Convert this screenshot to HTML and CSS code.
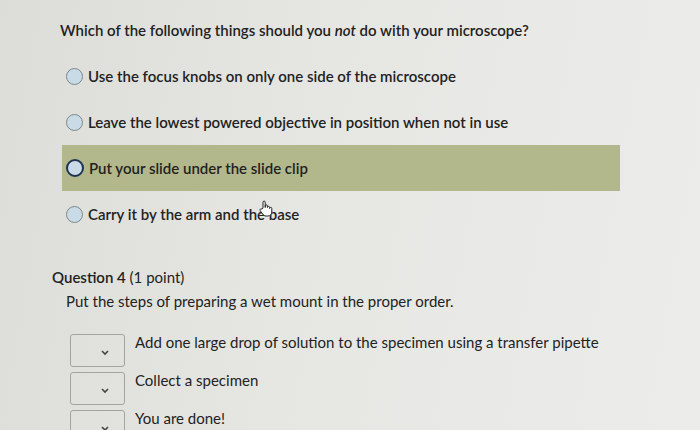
FILE: index.html
```html
<!DOCTYPE html>
<html lang="en">
<head>
    <meta charset="UTF-8">
    <meta name="viewport" content="width=device-width, initial-scale=1.0">
    <title>Quiz</title>
    <link rel="stylesheet" href="styles.css">
</head>
<body>
    <div class="quiz">
        <p class="prompt">Which of the following things should you <em>not</em> do with your microscope?</p>

        <div class="choices">
            <label class="choice"><span class="radio"></span>Use the focus knobs on only one side of the microscope</label>
            <label class="choice"><span class="radio"></span>Leave the lowest powered objective in position when not in use</label>
            <label class="choice active"><span class="radio"></span>Put your slide under the slide clip</label>
            <label class="choice"><span class="radio"></span>Carry it by the arm and the base</label>
        </div>

        <h2 class="q-title"><strong>Question 4</strong> (1 point)</h2>
        <p class="q-text">Put the steps of preparing a wet mount in the proper order.</p>

        <div class="order">
            <div class="step">
                <div class="pick"><svg width="10" height="7" viewBox="0 0 10 7"><path d="M2 2 5 5 8 2" fill="none" stroke="#444" stroke-width="1.6"/></svg></div>
                <span>Add one large drop of solution to the specimen using a transfer pipette</span>
            </div>
            <div class="step">
                <div class="pick"><svg width="10" height="7" viewBox="0 0 10 7"><path d="M2 2 5 5 8 2" fill="none" stroke="#444" stroke-width="1.6"/></svg></div>
                <span>Collect a specimen</span>
            </div>
            <div class="step">
                <div class="pick"><svg width="10" height="7" viewBox="0 0 10 7"><path d="M2 2 5 5 8 2" fill="none" stroke="#444" stroke-width="1.6"/></svg></div>
                <span>You are done!</span>
            </div>
        </div>
    </div>

    <!-- mouse pointer -->
    <svg class="cursor" width="14" height="17" viewBox="0 0 14 17">
        <path d="M4 8V2.2a1.1 1.1 0 0 1 2.2 0V7.5V6a1.1 1.1 0 0 1 2.2 0v1.5a1.1 1.1 0 0 1 2.2 0v1a1.1 1.1 0 0 1 2.2 0V12c0 2.5-1.6 4-4 4H7c-1.6 0-2.5-.8-3.4-2L1.2 10.6a1.1 1.1 0 0 1 1.8-1.3Z" fill="#fff" stroke="#222" stroke-width="1"/>
    </svg>
</body>
</html>
```

FILE: styles.css
```css
body{
    margin: 0;
    height: 430px;
    background: linear-gradient(100deg, #dcddd9 0%, #e6e7e3 45%, #ecedea 100%);
    font-family: Lato, "Open Sans", sans-serif;
    color: #222;
    position: relative;
    overflow: hidden;
}
.quiz{
    padding: 20px 0 0 52px;
}
.prompt{
    margin: 0 0 0 8px;
    font-size: 15px;
    line-height: 20px;
    font-weight: 600;
}
.prompt em{
    font-weight: 600;
}

.choices{
    margin: 13px 0 0 10px;
    width: 558px;
}
.choice{
    height: 46px;
    display: flex;
    align-items: center;
    padding-left: 4px;
    font-size: 15px;
    font-weight: 600;
    color: #222;
}
.choice.active{
    background-color: #b3b88c;
}
.radio{
    width: 15px;
    height: 15px;
    border: 1px solid #7d8688;
    border-radius: 50%;
    background-color: #c8dbe6;
    margin-right: 5px;
    flex-shrink: 0;
}
.active .radio{
    border: 2px solid #1e3252;
    width: 14px;
    height: 14px;
}

.q-title{
    margin: 30px 0 0 0;
    font-size: 15px;
    line-height: 20px;
    font-weight: 400;
}
.q-title strong{
    font-weight: 600;
}
.q-text{
    margin: 4px 0 0 14px;
    font-size: 15px;
    line-height: 20px;
}

.order{
    margin: 23px 0 0 18px;
    display: flex;
    flex-direction: column;
    gap: 5px;
}
.step{
    display: flex;
    align-items: flex-start;
    gap: 10px;
    font-size: 15px;
}
.step span{
    margin-top: -2px;
    line-height: 20px;
}
.pick{
    width: 55px;
    height: 33px;
    border: 1px solid #a2a4a0;
    border-radius: 3px;
    display: flex;
    align-items: flex-end;
    justify-content: flex-end;
    padding: 0 14px 10px 0;
    box-sizing: border-box;
}

.cursor{
    position: absolute;
    left: 259px;
    top: 200px;
}
```
